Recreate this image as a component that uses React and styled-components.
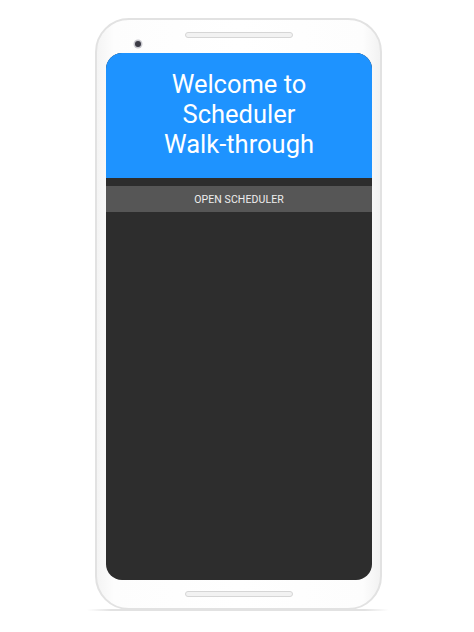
import React from "react"
import styled, { createGlobalStyle } from "styled-components"

const GlobalStyle = createGlobalStyle`
  html, body {
    margin: 0;
    padding: 0;
    background: #ffffff;
    font-family: Roboto, "Noto Sans", "Liberation Sans", sans-serif;
  }
`

const Page = styled.div`
  width: 474px;
  height: 632px;
  padding-top: 18px;
  box-sizing: border-box;
  display: flex;
  flex-direction: column;
  align-items: center;
`

const Frame = styled.div`
  position: relative;
  width: 287px;
  height: 592px;
  margin-left: 3px;
  box-sizing: border-box;
  border: 2px solid #e2e2e2;
  border-radius: 34px;
  background: linear-gradient(90deg, #f4f4f4 0%, #fdfdfd 6%, #ffffff 50%, #fdfdfd 94%, #f2f2f2 100%);
  display: flex;
  flex-direction: column;
  align-items: center;
`

const TopBar = styled.div`
  height: 33px;
  width: 100%;
  display: flex;
  justify-content: center;
  align-items: flex-start;
  padding-top: 12px;
  box-sizing: border-box;
`

const Speaker = styled.div`
  width: 106px;
  height: 4px;
  border: 1px solid #d6d6d6;
  border-radius: 4px;
  background: #f2f2f2;
`

const Camera = styled.div`
  position: absolute;
  left: 38px;
  top: 21px;
  width: 6px;
  height: 6px;
  border-radius: 50%;
  background: #3a3a44;
  box-shadow: 0 0 0 1.5px #c9c9cf;
`

const Screen = styled.div`
  width: 266px;
  height: 527px;
  margin-left: 1px;
  border-radius: 16px;
  overflow: hidden;
  background: #2d2d2d;
  display: flex;
  flex-direction: column;
`

const Header = styled.div`
  height: 125px;
  background: #1e93ff;
  color: #ffffff;
  font-size: 25.5px;
  line-height: 30px;
  text-align: center;
  display: flex;
  flex-direction: column;
  justify-content: center;
  padding-bottom: 3px;
  box-sizing: border-box;
`

const OpenButton = styled.div`
  margin-top: 8px;
  height: 26px;
  background: #565656;
  color: #eeeeee;
  font-size: 10.5px;
  font-weight: 400;
  letter-spacing: 0.1px;
  display: flex;
  align-items: center;
  justify-content: center;
`

const BottomBar = styled.div`
  flex: 1;
  display: flex;
  align-items: center;
  justify-content: center;
`

const Ground = styled.div`
  width: 302px;
  height: 2px;
  margin-top: -1px;
  margin-left: 2px;
  background: linear-gradient(90deg, rgba(225,225,225,0) 0%, #e2e2e2 8%, #e2e2e2 92%, rgba(225,225,225,0) 100%);
`

export default function App() {
  return (
    <>
      <GlobalStyle />
      <Page>
        <Frame>
          <TopBar>
            <Speaker />
          </TopBar>
          <Camera />
          <Screen>
            <Header>
              <div>Welcome to</div>
              <div>Scheduler</div>
              <div>Walk-through</div>
            </Header>
            <OpenButton>OPEN SCHEDULER</OpenButton>
          </Screen>
          <BottomBar>
            <Speaker />
          </BottomBar>
        </Frame>
        <Ground />
      </Page>
    </>
  )
}
